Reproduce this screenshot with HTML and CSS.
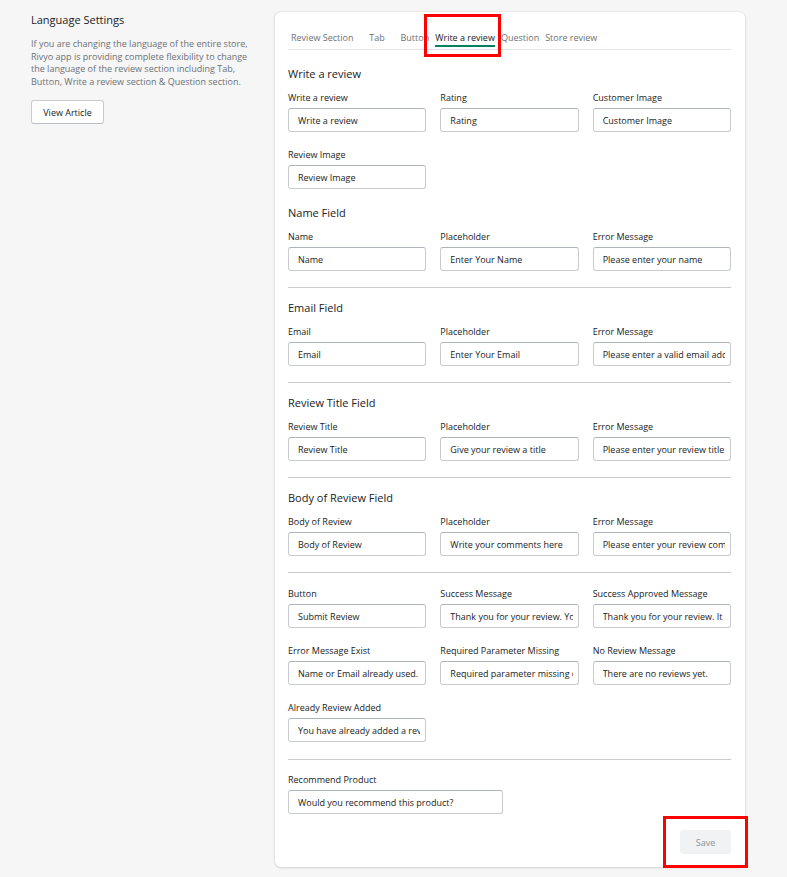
FILE: index.html
```html
<!DOCTYPE html>
<html lang="en">

<head>
    <meta charset="UTF-8">
    <meta name="viewport" content="width=device-width, initial-scale=1.0">
    <title>Language Settings</title>
    <link rel="stylesheet" href="styles.css">
</head>

<body>
    <div class="page">
        <!-- Left description -->
        <div class="intro">
            <h2 class="intro-title">Language Settings</h2>
            <p class="intro-text">If you are changing the language of the entire store, Rivyo app is providing complete flexibility to change the language of the review section including Tab, Button, Write a review section &amp; Question section.</p>
            <button class="btn">View Article</button>
        </div>

        <!-- Settings card -->
        <div class="card">
            <div class="tabs">
                <div class="tab">Review Section</div>
                <div class="tab short">Tab</div>
                <div class="tab">Button</div>
                <div class="tab active"><span>Write a review</span></div>
                <div class="tab">Question</div>
                <div class="tab">Store review</div>
            </div>

            <div class="section plain">
                <h3 class="section-title">Write a review</h3>
                <div class="grid">
                    <label class="field"><span>Write a review</span><input value="Write a review"></label>
                    <label class="field"><span>Rating</span><input value="Rating"></label>
                    <label class="field"><span>Customer Image</span><input value="Customer Image"></label>
                    <label class="field"><span>Review Image</span><input value="Review Image"></label>
                </div>
            </div>

            <div class="section first">
                <h3 class="section-title">Name Field</h3>
                <div class="grid">
                    <label class="field"><span>Name</span><input value="Name"></label>
                    <label class="field"><span>Placeholder</span><input value="Enter Your Name"></label>
                    <label class="field"><span>Error Message</span><input value="Please enter your name"></label>
                </div>
            </div>

            <div class="section">
                <h3 class="section-title">Email Field</h3>
                <div class="grid">
                    <label class="field"><span>Email</span><input value="Email"></label>
                    <label class="field"><span>Placeholder</span><input value="Enter Your Email"></label>
                    <label class="field"><span>Error Message</span><input value="Please enter a valid email address"></label>
                </div>
            </div>

            <div class="section">
                <h3 class="section-title">Review Title Field</h3>
                <div class="grid">
                    <label class="field"><span>Review Title</span><input value="Review Title"></label>
                    <label class="field"><span>Placeholder</span><input value="Give your review a title"></label>
                    <label class="field"><span>Error Message</span><input value="Please enter your review title"></label>
                </div>
            </div>

            <div class="section">
                <h3 class="section-title">Body of Review Field</h3>
                <div class="grid">
                    <label class="field"><span>Body of Review</span><input value="Body of Review"></label>
                    <label class="field"><span>Placeholder</span><input value="Write your comments here"></label>
                    <label class="field"><span>Error Message</span><input value="Please enter your review comments"></label>
                </div>
            </div>

            <div class="section no-title">
                <div class="grid">
                    <label class="field"><span>Button</span><input value="Submit Review"></label>
                    <label class="field"><span>Success Message</span><input value="Thank you for your review. Your review will be published soon."></label>
                    <label class="field"><span>Success Approved Message</span><input value="Thank you for your review. It has been published."></label>
                    <label class="field"><span>Error Message Exist</span><input value="Name or Email already used."></label>
                    <label class="field"><span>Required Parameter Missing</span><input value="Required parameter missing or invalid."></label>
                    <label class="field"><span>No Review Message</span><input value="There are no reviews yet."></label>
                    <label class="field"><span>Already Review Added</span><input value="You have already added a review."></label>
                </div>
            </div>

            <div class="section no-title last">
                <div class="grid two">
                    <label class="field"><span>Recommend Product</span><input value="Would you recommend this product?"></label>
                </div>
            </div>

            <div class="actions">
                <button class="btn-save" disabled>Save</button>
            </div>
        </div>
    </div>

    <!-- highlight marks -->
    <div class="mark mark-tab"></div>
    <div class="mark mark-save"></div>
</body>

</html>
```

FILE: styles.css
```css
* {
    box-sizing: border-box;
}

body {
    margin: 0;
    background-color: #f6f6f7;
    font-family: "Open Sans", "Noto Sans", sans-serif;
    font-size: 9px;
    color: #202223;
}

.page {
    display: grid;
    grid-template-columns: 244px 470px;
    padding: 12px 0 10px 31px;
}

.intro-title {
    margin: 0;
    font-size: 11px;
    font-weight: 400;
    line-height: 16px;
}

.intro-text {
    margin: 10px 0 0;
    width: 218px;
    line-height: 12.6px;
    color: #6d7175;
}

.btn {
    margin-top: 12px;
    width: 73px;
    height: 24px;
    font-family: inherit;
    font-size: 9px;
    font-weight: 500;
    color: #202223;
    background: #fff;
    border: 1px solid #c9cccf;
    border-bottom-color: #babfc3;
    border-radius: 3px;
}

.card {
    background: #fff;
    border-radius: 6px;
    padding: 19px 14px 13px 13px;
    box-shadow: 0 0 0 1px rgba(63, 63, 68, 0.05), 0 1px 3px rgba(63, 63, 68, 0.15);
}

.tabs {
    display: flex;
    border-bottom: 1px solid #e1e3e5;
}

.tab {
    padding: 0 3px 4px;
    text-align: center;
    line-height: 14px;
    color: #6d7175;
    white-space: nowrap;
}

.tab.short {
    min-width: 41px;
}

.tab.active {
    color: #202223;
    padding-bottom: 2px;
}

.tab.active span {
    display: inline-block;
    border-bottom: 2px solid #008060;
}

.section {
    padding: 12px 0 16px;
    border-bottom: 1px solid #c9cccf;
}

.section.plain {
    padding-top: 16px;
    border-bottom: none;
}

.section.first {
    padding-top: 0;
}

.section.no-title {
    padding-top: 14px;
    padding-bottom: 17px;
}

.section.last {
    padding-top: 13px;
    padding-bottom: 16px;
    border-bottom: none;
}

.section-title {
    margin: 0 0 9px;
    font-size: 11px;
    font-weight: 400;
    line-height: 16px;
}

.grid {
    display: grid;
    grid-template-columns: repeat(3, 1fr);
    column-gap: 14px;
    row-gap: 16px;
}

.grid.two {
    grid-template-columns: repeat(2, 1fr);
}

.field {
    display: flex;
    flex-direction: column;
}

.field span {
    line-height: 13px;
    margin-bottom: 4px;
}

.field input {
    width: 100%;
    height: 24px;
    padding: 0 5px 0 9px;
    font-family: inherit;
    font-size: 9px;
    color: #202223;
    background: #fff;
    border: 1px solid #c9cccf;
    border-top-color: #aeb4b9;
    border-radius: 3px;
}

.actions {
    display: flex;
    justify-content: flex-end;
}

.btn-save {
    width: 51px;
    height: 24px;
    font-family: inherit;
    font-size: 9px;
    color: #8c9196;
    background: #f1f2f3;
    border: none;
    border-radius: 3px;
}

.mark {
    position: absolute;
    border: 3px solid #ff0000;
}

.mark-tab {
    left: 424px;
    top: 14px;
    width: 77px;
    height: 43px;
}

.mark-save {
    left: 663px;
    top: 816px;
    width: 85px;
    height: 52px;
}
```
